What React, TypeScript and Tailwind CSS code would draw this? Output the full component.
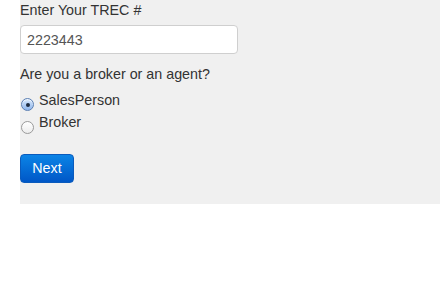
import { useState } from 'react';

function Radio({ checked }: { checked: boolean }) {
    return checked ? (
        <span className="mt-[8px] ml-[1px] flex h-[13px] w-[13px] shrink-0 items-center justify-center rounded-full border border-[#5b7fb3] bg-[linear-gradient(#d8e8fb,#8fb6ec)] shadow-[inset_0_1px_1px_rgba(255,255,255,0.8)]">
            <span className="h-[4px] w-[4px] rounded-full bg-[#1d2b3f]" />
        </span>
    ) : (
        <span className="mt-[9px] ml-[1px] h-[13px] w-[13px] shrink-0 rounded-full border border-[#9a9a9a] bg-[linear-gradient(#ffffff,#ececec)]" />
    );
}

export default function App() {
    const [role, setRole] = useState('sales');

    return (
        <div className="h-[300px] bg-white font-['Liberation_Sans',Arial,sans-serif] text-[14.3px] text-[#333]">
            <div className="ml-[20px] bg-[#f0f0f0] pb-[21px]">
                <div className="leading-[20px]">Enter Your TREC #</div>
                <input
                    defaultValue="2223443"
                    className="mt-[5px] block h-[29px] w-[218px] rounded-[4px] border border-[#cfcfcf] bg-white px-[6px] text-[14.3px] text-[#555] outline-none"
                />
                <div className="mt-[10px] leading-[20px]">Are you a broker or an agent?</div>

                <div className="mt-[6px] flex flex-col gap-[2px]">
                    <label className="flex h-[20px] cursor-pointer gap-[5px] leading-[20px]" onClick={() => setRole('sales')}>
                        <Radio checked={role === 'sales'} />
                        <span>SalesPerson</span>
                    </label>
                    <label className="flex h-[20px] cursor-pointer gap-[5px] leading-[20px]" onClick={() => setRole('broker')}>
                        <Radio checked={role === 'broker'} />
                        <span>Broker</span>
                    </label>
                </div>

                <button className="mt-[22px] h-[29px] w-[54px] rounded-[4px] border border-[#0a5bbd] bg-[linear-gradient(#0b84e6,#0057c7)] text-[14.3px] text-white">
                    Next
                </button>
            </div>
        </div>
    );
}
